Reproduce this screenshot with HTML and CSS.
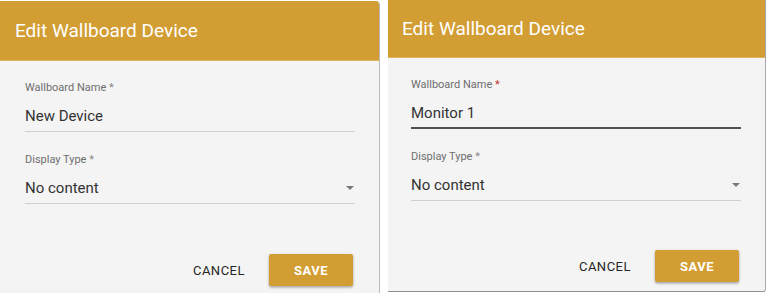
FILE: index.html
```html
<!DOCTYPE html>
<html>
<head>
<meta charset="utf-8">
<link rel="stylesheet" href="styles.css">
</head>
<body>
<div class="stage">
  <section class="dialog dialog-left">
    <header class="dialog-header">Edit Wallboard Device</header>
    <div class="dialog-content">
      <div class="field">
        <label class="field-label">Wallboard Name <span class="req">*</span></label>
        <div class="field-input">New Device</div>
      </div>
      <div class="field field-select">
        <label class="field-label">Display Type <span class="req">*</span></label>
        <div class="field-input">No content<span class="arrow"></span></div>
      </div>
    </div>
    <div class="dialog-actions">
      <button class="btn btn-text">Cancel</button>
      <button class="btn btn-primary">Save</button>
    </div>
  </section>
  <section class="dialog dialog-right">
    <header class="dialog-header">Edit Wallboard Device</header>
    <div class="dialog-content">
      <div class="field field-focused">
        <label class="field-label">Wallboard Name <span class="req req-error">*</span></label>
        <div class="field-input">Monitor 1</div>
      </div>
      <div class="field field-select">
        <label class="field-label">Display Type <span class="req">*</span></label>
        <div class="field-input">No content<span class="arrow"></span></div>
      </div>
    </div>
    <div class="dialog-actions">
      <button class="btn btn-text">Cancel</button>
      <button class="btn btn-primary">Save</button>
    </div>
  </section>
</div>
</body>
</html>
```

FILE: styles.css
```css
html, body {
  margin: 0;
  padding: 0;
  background: #ffffff;
  font-family: Roboto, "Liberation Sans", sans-serif;
}

.stage {
  display: flex;
  align-items: flex-start;
  gap: 8px;
  width: 768px;
  height: 293px;
  overflow: hidden;
}

.dialog {
  background: #f4f4f4;
  box-sizing: border-box;
  display: flex;
  flex-direction: column;
}

.dialog-left {
  width: 380px;
  height: 320px;
  margin-top: 1px;
  border-right: 1px solid #b9b9b9;
  border-top-right-radius: 4px;
  overflow: hidden;
}

.dialog-right {
  width: 378px;
  height: 292px;
  border-right: 1px solid #a9a9a9;
  border-bottom: 1px solid #8f8f8f;
  border-bottom-right-radius: 3px;
}

.dialog-header {
  background: #d29d32;
  color: #ffffff;
  font-size: 19px;
  line-height: 24px;
  padding-left: 15px;
  display: flex;
  align-items: center;
  border-bottom: 1px solid #e0b45a;
  box-sizing: border-box;
}

.dialog-left .dialog-header {
  height: 60px;
}

.dialog-right .dialog-header {
  height: 58px;
  padding-left: 14px;
}

.dialog-content {
  padding: 20px 24px 0 25px;
}

.dialog-right .dialog-content {
  padding: 20px 24px 0 23px;
}

.field + .field {
  margin-top: 21px;
}

.field-label {
  display: block;
  font-size: 11px;
  line-height: 14px;
  font-weight: 400;
  color: #6e6e6e;
}

.req {
  color: #8a8a8a;
}

.req-error {
  color: #c0392b;
}

.field-input {
  margin-top: 11px;
  font-size: 15px;
  line-height: 20px;
  color: #333333;
  padding-bottom: 5px;
  border-bottom: 1px solid #d0d0d0;
  display: flex;
  align-items: center;
  justify-content: space-between;
}

.field-focused .field-input {
  padding-bottom: 4px;
  border-bottom: 2px solid #505050;
}

.arrow {
  width: 0;
  height: 0;
  border-left: 4px solid transparent;
  border-right: 4px solid transparent;
  border-top: 4px solid #7a7a7a;
  margin-right: 1px;
}

.dialog-actions {
  display: flex;
  justify-content: flex-end;
  align-items: center;
  gap: 8px;
  margin-top: 50px;
  padding-right: 26px;
}

.dialog-right .dialog-actions {
  margin-top: 49px;
}

.btn {
  font-family: Roboto, "Liberation Sans", sans-serif;
  font-size: 13px;
  font-weight: 400;
  text-transform: uppercase;
  letter-spacing: 0.5px;
  height: 32px;
  border: none;
  border-radius: 2px;
  cursor: pointer;
}

.btn-text {
  background: transparent;
  color: #262626;
  padding: 0 16px;
}

.btn-primary {
  width: 84px;
  background: #d29d32;
  color: #ffffff;
  font-weight: 700;
  box-shadow: 0 1px 3px rgba(0, 0, 0, 0.25), 0 2px 2px rgba(0, 0, 0, 0.12);
}
```
